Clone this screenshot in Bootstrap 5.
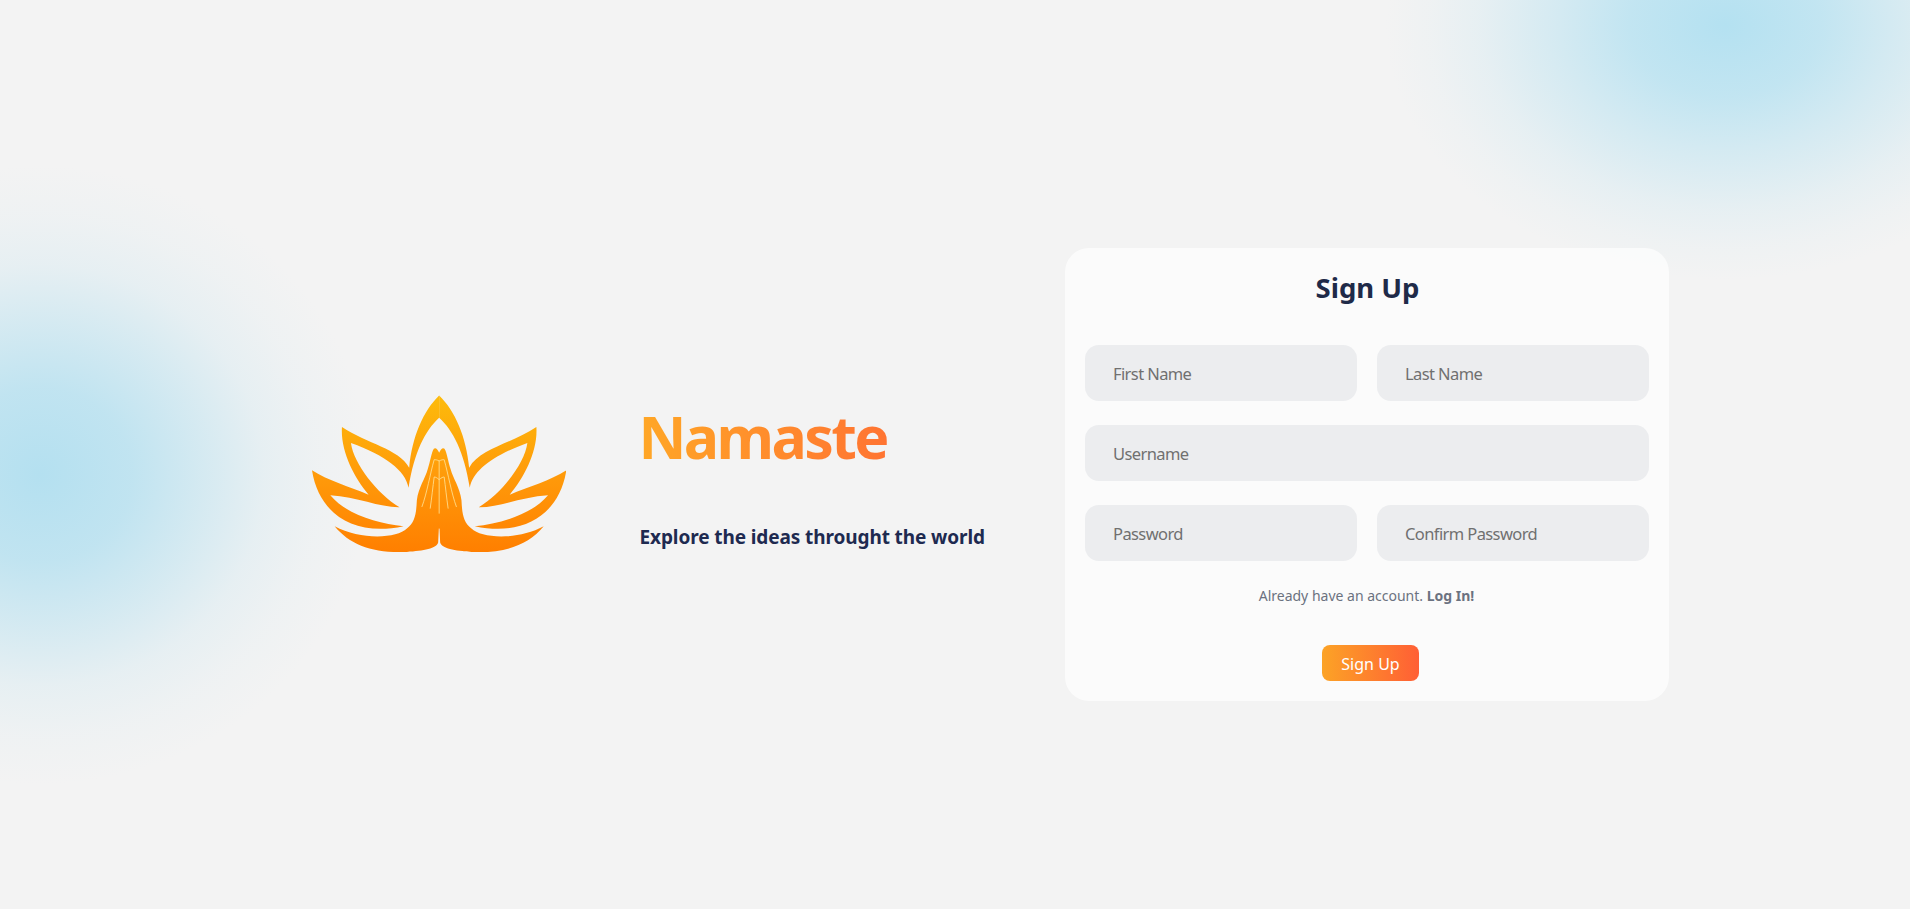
<!DOCTYPE html>
<html lang="en">
<head>
<meta charset="utf-8">
<title>Namaste - Sign Up</title>
<link href="https://cdn.jsdelivr.net/npm/bootstrap@5.3.0/dist/css/bootstrap.min.css" rel="stylesheet">
<style>
html, body { height: 100%; }
body {
  font-family: "Noto Sans", "Open Sans", sans-serif;
  background-color: #f3f3f3;
  background-image:
    radial-gradient(ellipse 340px 255px at 1725px 25px, rgba(180,225,241,1) 0%, rgba(180,225,241,.78) 28%, rgba(180,225,241,.48) 50%, rgba(180,225,241,.2) 72%, rgba(180,225,241,.07) 87%, rgba(180,225,241,0) 100%),
    radial-gradient(ellipse 330px 310px at 40px 475px, rgba(180,224,240,1) 0%, rgba(180,224,240,.8) 28%, rgba(180,224,240,.5) 48%, rgba(180,224,240,.2) 68%, rgba(180,224,240,.07) 84%, rgba(180,224,240,0) 100%);
  background-repeat: no-repeat;
  overflow: hidden;
}
.stage { min-height: 909px; padding-left: 70px; padding-top: 40px; }
.lotus { width: 254px; height: 158px; margin: -2px 74px 0 0; flex: none; }
.brand-col { width: 425px; flex: none; padding-top: 4px; }
.brand-name {
  display: inline-block;
  font-size: 59px; font-weight: 700; line-height: 1.2; margin: 0 0 0 -1px;
  letter-spacing: -2.6px;
  background-image: linear-gradient(90deg, #ffa726, #ff7432);
  -webkit-background-clip: text; background-clip: text;
  color: transparent;
}
.brand-tag { font-size: 19px; font-weight: 700; color: #1e2a50; letter-spacing: -.1px; margin: 51px 0 0; }
.signup-panel {
  width: 604px; height: 453px; flex: none; padding: 20px;
  background: rgba(255,255,255,.66);
  border-radius: 24px;
}
.signup-title { font-size: 27.5px; font-weight: 700; color: #1f2a48; margin: 0 0 37px; line-height: 40px; padding-left: 2px; }
.signup-fields { --bs-gutter-x: 20px; --bs-gutter-y: 24px; }
.signup-input {
  height: 56px; background: #ecedef; border: 0; border-radius: 14px;
  padding: 0 28px 0 28.5px; font-size: 16.5px; letter-spacing: -.6px; color: #333;
}
.signup-input:focus { background: #ecedef; box-shadow: none; }
.signup-input::placeholder { color: #707070; opacity: 1; }
.signup-note { font-size: 14px; color: #6b7280; margin: 24px 0 0; line-height: 22px; }
.signup-btn {
  display: block; margin: 38px 0 0 237px; width: 97px; height: 36px; padding: 1px 0 0 1px;
  background-image: linear-gradient(90deg, #fca326, #ff5f35);
  color: #fff; border: 0; border-radius: 8px; font-size: 16px;
}
</style>
</head>
<body>
<main class="stage d-flex align-items-center justify-content-center">
  <svg class="lotus" viewBox="65 45 763 472" role="img" aria-label="Namaste lotus logo">
    <defs>
      <linearGradient id="lotusFill" gradientUnits="userSpaceOnUse" x1="0" y1="45" x2="0" y2="515">
        <stop offset="0" stop-color="#fdbb0b"/>
        <stop offset=".5" stop-color="#ff9b0a"/>
        <stop offset="1" stop-color="#ff7f00"/>
      </linearGradient>
      <g id="lotusHalf">
        <path fill="url(#lotusFill)" d="M155,140 C230,190 325,205 357,262 C365,170 400,90 447,45 L447,112 C405,150 372,215 355,322 C345,270 285,225 182,188 C190,250 260,340 328,381 C270,382 200,350 120,345 C165,400 260,430 340,438 C190,470 85,400 65,270 C110,300 180,320 235,343 C190,290 150,210 155,140 Z"/>
        <path fill="url(#lotusFill)" d="M447.5,218 C442,205 436,201 431,205 C424,215 420,245 413,265 C405,295 385,320 380,360 C378,400 375,425 350,445 C320,475 210,480 133,438 C180,495 250,520 350,515 C400,512 440,505 444,487 L446,445 L447.5,445 Z"/>
        <path fill="none" stroke="#ffdf90" stroke-width="2.6" d="M447,242 C440,238 436,238 432,238 C420,280 410,340 395,380 M447,298 C440,292 436,290 432,290 C428,320 425,350 420,385"/>
      </g>
    </defs>
    <use href="#lotusHalf"/>
    <use href="#lotusHalf" transform="translate(894,0) scale(-1,1)"/>
    <path fill="none" stroke="#ffdf90" stroke-width="2.6" d="M447,240 V400"/>
  </svg>
  <div class="brand-col">
    <h1 class="brand-name">Namaste</h1>
    <p class="brand-tag">Explore the ideas throught the world</p>
  </div>
  <form class="signup-panel">
    <h2 class="signup-title text-center">Sign Up</h2>
    <div class="row signup-fields">
      <div class="col-6"><input class="form-control signup-input" type="text" placeholder="First Name"></div>
      <div class="col-6"><input class="form-control signup-input" type="text" placeholder="Last Name"></div>
      <div class="col-12"><input class="form-control signup-input" type="text" placeholder="Username"></div>
      <div class="col-6"><input class="form-control signup-input" type="password" placeholder="Password"></div>
      <div class="col-6"><input class="form-control signup-input" type="password" placeholder="Confirm Password"></div>
    </div>
    <p class="signup-note text-center">Already have an account. <b>Log In!</b></p>
    <button class="btn signup-btn" type="button">Sign Up</button>
  </form>
</main>
<script src="https://cdn.jsdelivr.net/npm/bootstrap@5.3.0/dist/js/bootstrap.bundle.min.js"></script>
</body>
</html>
